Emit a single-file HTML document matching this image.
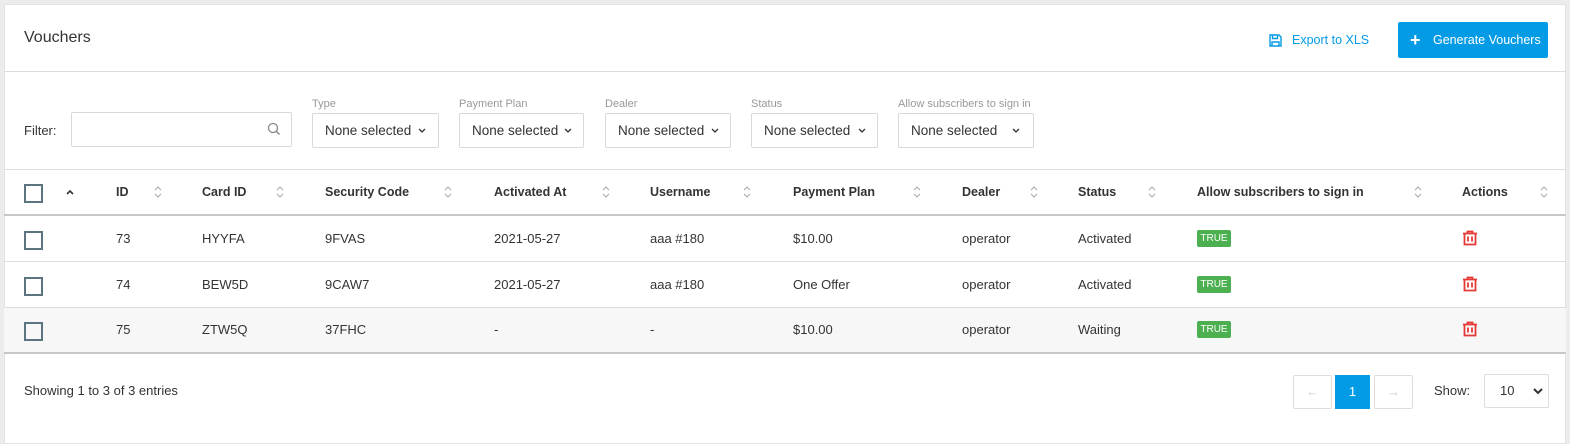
<!DOCTYPE html>
<html><head><style>
body{margin:0;background:#ececec;font-family:"Liberation Sans",sans-serif;color:#333;font-size:13px;width:1570px;height:433px;overflow:hidden;position:relative}
.card{position:absolute;left:4px;top:4px;width:1562px;height:440px;background:#fff;border:1px solid #e3e3e3;box-sizing:border-box}
.a{position:absolute;white-space:nowrap}
.hl{position:absolute;left:4px;width:1562px;height:1px;background:#dcdcdc}
.sel{position:absolute;top:113px;height:35px;border:1px solid #d9d9d9;border-radius:2px;box-sizing:border-box;font-size:13.5px;color:#333;line-height:34px;padding-left:12px}
.sel svg{position:absolute;top:14px}
.lab{position:absolute;top:98px;font-size:11px;color:#999}
.cb{position:absolute;left:24px;width:15px;height:15px;border:2px solid #5c7380}
.th{position:absolute;top:185px;font-weight:bold;font-size:12.5px;color:#333}
.td{position:absolute;font-size:13px;color:#333}
.badge{position:absolute;left:1197px;width:34px;height:17px;background:#4caf50;color:#fff;font-size:10px;line-height:18px;text-align:center;border-radius:2px}
</style></head><body>
<div class="card"></div>
<svg width="0" height="0" style="position:absolute"><defs>
<g id="c"><path d="M1 1l3 3 3-3" fill="none" stroke="#333" stroke-width="1.3"/></g>
<g id="s"><path d="M1 4l3-3 3 3M1 8l3 3 3-3" fill="none" stroke="#aaa" stroke-width="1.1"/></g>
<g id="t"><path d="M1 3.5h14M5.5 3.5V1.5h5v2M2.5 3.5v11h11v-11M6 6.5v5M10 6.5v5" fill="none" stroke="#e53935" stroke-width="1.8"/></g>
</defs></svg>
<div class="a" style="left:24px;top:29px;font-size:16px;color:#333">Vouchers</div>
<svg class="a" style="left:1269px;top:34px" width="13" height="13" viewBox="0 0 13 13"><path d="M1 1h9l2 2v9H1z M3.5 1v3.5h5V1 M3 12V8h7v4" fill="none" stroke="#039be5" stroke-width="1.4"/></svg>
<div class="a" style="left:1292px;top:33px;color:#039be5;font-size:12.5px">Export to XLS</div>
<div class="a" style="left:1398px;top:22px;width:150px;height:36px;background:#039be5;border-radius:2px;color:#fff;font-size:12.5px;line-height:36px"><span style="position:absolute;left:12px;font-size:18px;font-weight:bold">+</span><span style="position:absolute;left:35px">Generate Vouchers</span></div>
<div class="hl" style="top:71px"></div>
<div class="a" style="left:24px;top:123px;font-size:13px">Filter:</div>
<div class="sel" style="left:71px;width:221px;top:112px"></div>
<svg class="a" style="left:267px;top:122px" width="14" height="14" viewBox="0 0 14 14"><circle cx="6" cy="6" r="4.5" fill="none" stroke="#888" stroke-width="1.3"/><path d="M9.5 9.5l3 3" stroke="#888" stroke-width="1.5"/></svg>
<div class="lab" style="left:312px">Type</div><div class="sel" style="left:312px;width:127px">None selected<svg style="left:105px" width="8" height="6"><use href="#c"/></svg></div>
<div class="lab" style="left:459px">Payment Plan</div><div class="sel" style="left:459px;width:125px">None selected<svg style="left:104px" width="8" height="6"><use href="#c"/></svg></div>
<div class="lab" style="left:605px">Dealer</div><div class="sel" style="left:605px;width:126px">None selected<svg style="left:105px" width="8" height="6"><use href="#c"/></svg></div>
<div class="lab" style="left:751px">Status</div><div class="sel" style="left:751px;width:127px">None selected<svg style="left:106px" width="8" height="6"><use href="#c"/></svg></div>
<div class="lab" style="left:898px">Allow subscribers to sign in</div><div class="sel" style="left:898px;width:136px">None selected<svg style="left:113px" width="8" height="6"><use href="#c"/></svg></div>
<div class="hl" style="top:169px"></div>
<div class="cb" style="top:184px"></div>
<svg class="a" style="left:66px;top:189px" width="8" height="6"><path d="M1 5l3-3 3 3" fill="none" stroke="#333" stroke-width="1.6"/></svg>
<div class="th" style="left:116px">ID</div>
<div class="th" style="left:202px">Card ID</div>
<div class="th" style="left:325px">Security Code</div>
<div class="th" style="left:494px">Activated At</div>
<div class="th" style="left:650px">Username</div>
<div class="th" style="left:793px">Payment Plan</div>
<div class="th" style="left:962px">Dealer</div>
<div class="th" style="left:1078px">Status</div>
<div class="th" style="left:1197px">Allow subscribers to sign in</div>
<div class="th" style="left:1462px">Actions</div>
<svg class="a" style="left:154px;top:186px" width="8" height="12"><use href="#s"/></svg>
<svg class="a" style="left:276px;top:186px" width="8" height="12"><use href="#s"/></svg>
<svg class="a" style="left:444px;top:186px" width="8" height="12"><use href="#s"/></svg>
<svg class="a" style="left:602px;top:186px" width="8" height="12"><use href="#s"/></svg>
<svg class="a" style="left:743px;top:186px" width="8" height="12"><use href="#s"/></svg>
<svg class="a" style="left:913px;top:186px" width="8" height="12"><use href="#s"/></svg>
<svg class="a" style="left:1030px;top:186px" width="8" height="12"><use href="#s"/></svg>
<svg class="a" style="left:1148px;top:186px" width="8" height="12"><use href="#s"/></svg>
<svg class="a" style="left:1414px;top:186px" width="8" height="12"><use href="#s"/></svg>
<svg class="a" style="left:1540px;top:186px" width="8" height="12"><use href="#s"/></svg>
<div class="hl" style="top:214px;height:2px;background:#c8c8c8"></div>
<div class="hl" style="top:261px"></div>
<div style="position:absolute;left:4px;top:307px;width:1562px;height:45px;background:#f7f7f7;border-top:1px solid #dcdcdc;box-sizing:border-box"></div>
<div class="hl" style="top:352px;height:2px;background:#c8c8c8"></div>

<div class="cb" style="top:231px"></div>
<div class="td" style="left:116px;top:231px">73</div><div class="td" style="left:202px;top:231px">HYYFA</div><div class="td" style="left:325px;top:231px">9FVAS</div><div class="td" style="left:494px;top:231px">2021-05-27</div><div class="td" style="left:650px;top:231px">aaa #180</div><div class="td" style="left:793px;top:231px">$10.00</div><div class="td" style="left:962px;top:231px">operator</div><div class="td" style="left:1078px;top:231px">Activated</div>
<div class="badge" style="top:230px">TRUE</div>

<div class="cb" style="top:277px"></div>
<div class="td" style="left:116px;top:277px">74</div><div class="td" style="left:202px;top:277px">BEW5D</div><div class="td" style="left:325px;top:277px">9CAW7</div><div class="td" style="left:494px;top:277px">2021-05-27</div><div class="td" style="left:650px;top:277px">aaa #180</div><div class="td" style="left:793px;top:277px">One Offer</div><div class="td" style="left:962px;top:277px">operator</div><div class="td" style="left:1078px;top:277px">Activated</div>
<div class="badge" style="top:276px">TRUE</div>

<div class="cb" style="top:322px"></div>
<div class="td" style="left:116px;top:322px">75</div><div class="td" style="left:202px;top:322px">ZTW5Q</div><div class="td" style="left:325px;top:322px">37FHC</div><div class="td" style="left:494px;top:322px">-</div><div class="td" style="left:650px;top:322px">-</div><div class="td" style="left:793px;top:322px">$10.00</div><div class="td" style="left:962px;top:322px">operator</div><div class="td" style="left:1078px;top:322px">Waiting</div>
<div class="badge" style="top:321px">TRUE</div>

<svg class="a" style="left:1462px;top:230px" width="16" height="16"><use href="#t"/></svg>
<svg class="a" style="left:1462px;top:276px" width="16" height="16"><use href="#t"/></svg>
<svg class="a" style="left:1462px;top:321px" width="16" height="16"><use href="#t"/></svg>

<div class="a" style="left:24px;top:383px">Showing 1 to 3 of 3 entries</div>
<div class="a" style="left:1293px;top:375px;width:37px;height:32px;border:1px solid #ddd;border-radius:2px;text-align:center;line-height:32px;color:#ccc">&larr;</div>
<div class="a" style="left:1335px;top:375px;width:35px;height:34px;background:#039be5;color:#fff;text-align:center;line-height:34px">1</div>
<div class="a" style="left:1374px;top:375px;width:37px;height:32px;border:1px solid #ddd;border-radius:2px;text-align:center;line-height:32px;color:#ccc">&rarr;</div>
<div class="a" style="left:1434px;top:383px">Show:</div>
<div class="a" style="left:1484px;top:374px;width:63px;height:32px;border:1px solid #ddd;border-radius:2px;line-height:32px"><span style="position:absolute;left:15px">10</span><svg style="position:absolute;left:48px;top:12px" width="10" height="8"><path d="M1 2l4 4 4-4" fill="none" stroke="#333" stroke-width="2"/></svg></div>
</body></html>
